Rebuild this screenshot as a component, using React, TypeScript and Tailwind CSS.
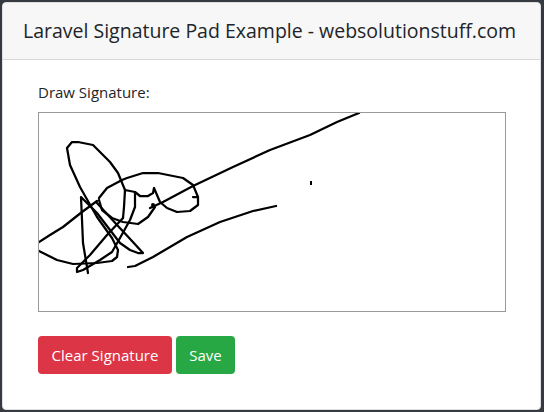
const strokes = [
  "M39 242 L50 235 L63 227 L82 212 L97 201 M99 198 L107 188 L122 180 L127 178 L143 173 L158 173 L183 178 L193 185 L198 197 L193 197 M198 197 L198 205 L190 211 L177 212 L167 208 L160 202 L154 188 L153 193 L148 196 L140 196 L135 192 L125 190 L124 207 L123 218",
  "M39 251 L57 260 L73 264 L97 263 L112 261 L117 257 L118 250 L112 238 L97 217 L80 187 L70 165 L67 148 L72 142 L78 142 L93 145 L110 162 L118 173 L125 190",
  "M88 273 L83 243 L81 197 L97 213 L120 243 L130 250 L138 253 L143 253 L132 241 L118 226 L97 203",
  "M99 200 L102 210 L112 218 L123 222 L138 224 L148 217 L155 207",
  "M135 192 L135 207 L130 220 L120 238 L112 252 L100 260 L83 270 L77 272 L77 268 L90 255 L107 235 L123 218",
  "M150 208 L163 202 L193 186 L233 167 L270 150 L310 135 L337 122 L359 113",
  "M128 267 L135 266 L153 257 L187 237 L220 222 L253 211 L276 206",
];

export default function App() {
  return (
    <div className="h-[412px] w-[544px] overflow-hidden bg-[#343a40] pt-0.5 pl-0.5 font-['Open_Sans','Noto_Sans',sans-serif] text-[#212529]">
      <div className="h-[408px] w-[539px] overflow-hidden rounded border border-[#dfdfdf] bg-white">
        <div className="flex h-[57px] items-center border-b border-[#d8d8d8] bg-[#f7f7f7] pl-5">
          <h1 className="text-[19.5px] font-medium whitespace-nowrap">
            Laravel Signature Pad Example - websolutionstuff.com
          </h1>
        </div>
        <div className="px-[35px] pt-5">
          <label className="block text-[15px] leading-6">Draw Signature:</label>
          <div className="mt-2 h-[200px] w-[468px] border border-[#9a9a9a]">
            <svg viewBox="39 113 466 198" className="block h-full w-full">
              {strokes.map((d) => (
                <path
                  key={d}
                  d={d}
                  fill="none"
                  stroke="#000"
                  strokeWidth={2.25}
                  strokeLinecap="round"
                  strokeLinejoin="round"
                />
              ))}
              <circle cx="153" cy="205" r="2" fill="#000" />
              <rect x="310" y="181" width="2" height="4" fill="#000" />
            </svg>
          </div>
          <div className="mt-[24px] flex gap-1">
            <button className="h-[38px] w-[134px] rounded bg-[#dc3545] text-[15px] text-white">
              Clear Signature
            </button>
            <button className="h-[38px] w-[59px] rounded bg-[#28a745] text-[15px] text-white">
              Save
            </button>
          </div>
        </div>
      </div>
    </div>
  );
}
